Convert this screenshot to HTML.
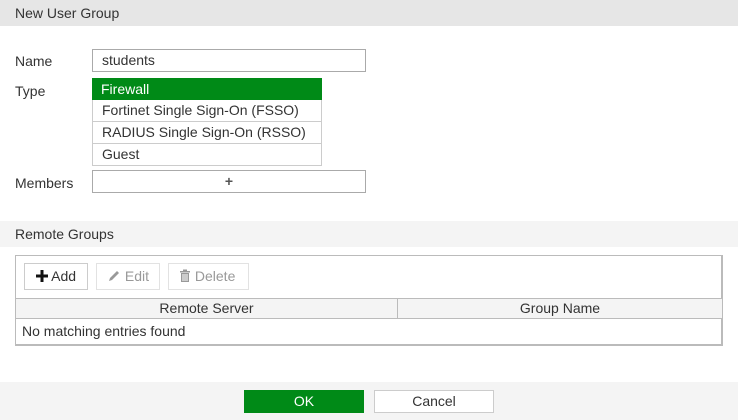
<!DOCTYPE html>
<html><head><style>
*{margin:0;padding:0;box-sizing:border-box}
body{width:738px;height:420px;background:#fff;font-family:"Liberation Sans",sans-serif;font-size:14px;color:#333;position:relative;overflow:hidden}
.a{position:absolute}
.bar{left:0;width:738px;height:26px;line-height:26px;padding-left:15px}
.box{border:1px solid #aaa;background:#fff}
.li{left:92px;width:230px;height:22px;line-height:21px;padding-left:9px;border:1px solid #ccc;border-top:none}
.btn{border:1px solid #ccc;background:#fff;height:27px;line-height:25px;font-size:14px}
</style></head><body>
<div class="a bar" style="top:0;background:#e6e6e6">New User Group</div>
<div class="a" style="left:15px;top:53px">Name</div>
<div class="a box" style="left:92px;top:49px;width:274px;height:23px;line-height:21px;padding-left:9px">students</div>
<div class="a" style="left:15px;top:83px">Type</div>
<div class="a" style="left:92px;top:78px;width:230px;height:22px;line-height:22px;padding-left:9px;background:#008a17;color:#fff">Firewall</div>
<div class="a li" style="top:100px">Fortinet Single Sign-On (FSSO)</div>
<div class="a li" style="top:122px">RADIUS Single Sign-On (RSSO)</div>
<div class="a li" style="top:144px">Guest</div>
<div class="a" style="left:15px;top:175px">Members</div>
<div class="a box" style="left:92px;top:170px;width:274px;height:23px;text-align:center;line-height:20px;font-weight:bold;color:#555">+</div>
<div class="a bar" style="top:221px;background:#f4f4f4">Remote Groups</div>
<div class="a" style="left:15px;top:255px;width:708px;height:91px;border:1px solid #bbb;border-bottom:2px solid #bbb;border-right:2px solid #bbb"></div>
<div class="a btn" style="left:24px;top:263px;width:64px;padding-left:11px"><svg width="12" height="12" viewBox="0 0 12 12" style="vertical-align:-1px"><path d="M4.5 0h3v4.5H12v3H7.5V12h-3V7.5H0v-3h4.5z" fill="#111"/></svg> Add</div>
<div class="a btn" style="left:96px;top:263px;width:64px;padding-left:10px;color:#999;border-color:#e2e2e2"><svg width="14" height="14" viewBox="0 0 14 14" style="vertical-align:-2px"><path d="M2 12l1-3 7-7 2 2-7 7z" fill="#999"/></svg> Edit</div>
<div class="a btn" style="left:168px;top:263px;width:81px;padding-left:10px;color:#999;border-color:#e2e2e2"><svg width="12" height="14" viewBox="0 0 12 14" style="vertical-align:-2px"><path d="M1 2h10v1.5H1zM4 0.5h4V2H4zM2 4h8v9H2z" fill="#999"/><path d="M4 5v7M6 5v7M8 5v7" stroke="#fff"/></svg> Delete</div>
<div class="a" style="left:16px;top:298px;width:706px;height:21px;background:#f4f4f4;border-top:1px solid #bbb;border-bottom:1px solid #bbb"></div>
<div class="a" style="left:16px;top:300px;width:381px;text-align:center">Remote Server</div>
<div class="a" style="left:397px;top:298px;width:1px;height:21px;background:#bbb"></div>
<div class="a" style="left:398px;top:300px;width:324px;text-align:center">Group Name</div>
<div class="a" style="left:22px;top:323px">No matching entries found</div>
<div class="a" style="left:0;top:382px;width:738px;height:38px;background:#f4f4f4"></div>
<div class="a" style="left:244px;top:390px;width:120px;height:23px;line-height:23px;background:#008a17;color:#fff;text-align:center">OK</div>
<div class="a" style="left:374px;top:390px;width:120px;height:23px;line-height:21px;background:#fff;border:1px solid #ccc;text-align:center">Cancel</div>
</body></html>
